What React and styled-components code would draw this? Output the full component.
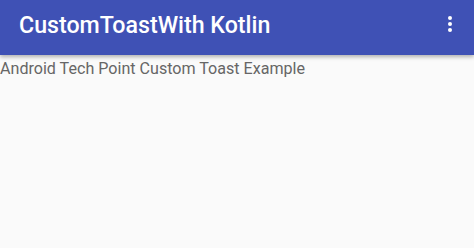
import React from 'react';
import styled, { createGlobalStyle } from 'styled-components';

const GlobalStyle = createGlobalStyle`
  html, body {
    margin: 0;
    padding: 0;
    background: #fafafa;
    font-family: Roboto, "Liberation Sans", sans-serif;
  }
`;

const Screen = styled.div`
  width: 474px;
  height: 248px;
  background: #fafafa;
  overflow: hidden;
`;

const AppBar = styled.header`
  height: 55px;
  background: #3f51b5;
  display: flex;
  align-items: center;
  justify-content: space-between;
  padding: 0 22px 0 19px;
  box-shadow: 0 2px 4px rgba(0, 0, 0, 0.3);
  position: relative;
`;

const Title = styled.h1`
  margin: 0;
  color: #ffffff;
  font-size: 23.2px;
  font-weight: 500;
  margin-top: -5px;
`;

const MenuButton = styled.div`
  display: flex;
  flex-direction: column;
  gap: 2px;
  margin-top: -8px;
`;

const Dot = styled.span`
  width: 4px;
  height: 4px;
  border-radius: 50%;
  background: #ffffff;
`;

const Content = styled.main`
  padding: 4px 0 0 0;
`;

const Message = styled.p`
  margin: 0;
  color: #666666;
  font-size: 16.1px;
`;

export default function App() {
  return (
    <Screen>
      <GlobalStyle />
      <AppBar>
        <Title>CustomToastWith Kotlin</Title>
        <MenuButton>
          <Dot />
          <Dot />
          <Dot />
        </MenuButton>
      </AppBar>
      <Content>
        <Message>Android Tech Point Custom Toast Example</Message>
      </Content>
    </Screen>
  );
}
